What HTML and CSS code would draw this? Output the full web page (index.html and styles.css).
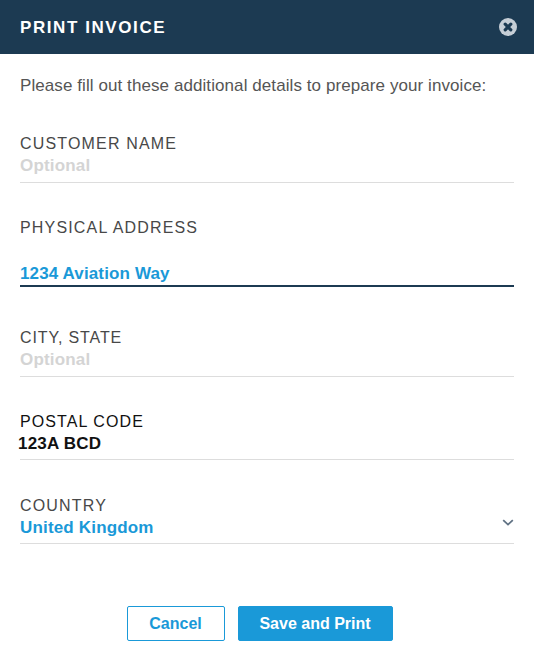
FILE: index.html
```html
<!DOCTYPE html>
<html lang="en">
<head>
<meta charset="utf-8">
<title>Print Invoice</title>
<link rel="stylesheet" href="styles.css">
</head>
<body>
<div class="modal">
  <header class="modal-header">
    <h1 class="modal-title">PRINT INVOICE</h1>
    <svg class="close-icon" viewBox="0 0 18 18" width="18" height="18" aria-hidden="true">
      <circle cx="9" cy="9" r="9" fill="#c6ced6"/>
      <path d="M6.2 6.2l5.6 5.6M11.8 6.2l-5.6 5.6" stroke="#1c3a52" stroke-width="3.2" stroke-linecap="round"/>
    </svg>
  </header>
  <main class="modal-body">
    <p class="intro">Please fill out these additional details to prepare your invoice:</p>
    <div class="field field-customer">
      <div class="field-label">CUSTOMER NAME</div>
      <div class="field-value placeholder">Optional</div>
    </div>
    <div class="field field-address">
      <div class="field-label">PHYSICAL ADDRESS</div>
      <div class="field-value accent">1234 Aviation Way</div>
    </div>
    <div class="field field-city">
      <div class="field-label tight">CITY, STATE</div>
      <div class="field-value placeholder">Optional</div>
    </div>
    <div class="field field-postal">
      <div class="field-label dark">POSTAL CODE</div>
      <div class="field-value dark shifted">123A BCD</div>
    </div>
    <div class="field field-country">
      <div class="field-label">COUNTRY</div>
      <div class="field-value accent">United Kingdom</div>
      <svg class="chevron" viewBox="0 0 12 7" width="12" height="7" aria-hidden="true">
        <path d="M1.2 1.2L6 5.6l4.8-4.4" fill="none" stroke="#5f7183" stroke-width="1.8"/>
      </svg>
    </div>
    <div class="actions">
      <button class="btn btn-outline" type="button">Cancel</button>
      <button class="btn btn-primary" type="button">Save and Print</button>
    </div>
  </main>
</div>
</body>
</html>
```
FILE: styles.css
```css
* { box-sizing: border-box; }
html, body { margin: 0; padding: 0; background: #fff; }
body { font-family: "Liberation Sans", Arial, sans-serif; width: 534px; height: 662px; overflow: hidden; }
.modal-header {
  height: 54px; background: #1c3a52; display: flex; align-items: center;
  justify-content: space-between; padding: 0 17px 0 20px;
}
.modal-title { margin: 0; padding-top: 1px; font-size: 17px; font-weight: 700; letter-spacing: 1.58px; color: #fff; }
.close-icon { display: block; }
.modal-body { padding: 22px 20px 0; }
.intro { margin: 0; font-size: 17px; line-height: 20px; letter-spacing: 0.08px; color: #555; }
.field { position: relative; border-bottom: 1px solid #ddd; }
.field-label { font-size: 16px; line-height: 20px; letter-spacing: 1.17px; color: #484848; }
.field-label.tight { letter-spacing: 0.88px; }
.field-value { font-size: 17px; line-height: 22px; letter-spacing: 0.17px; font-weight: 700; margin-top: 1px; }
.placeholder { color: #d4d4d4; }
.accent { color: #1a99d8; }
.dark { color: #111; }
.field-label.dark { letter-spacing: 1.08px; }
.field-value.shifted { margin: 1px 0 0 -2px; letter-spacing: 0.2px; }
.field-customer { margin-top: 38px; padding-bottom: 5px; }
.field-address { margin-top: 35px; padding-bottom: 0; border-bottom: 2px solid #1c3a52; }
.field-address .field-value { margin-top: 25px; letter-spacing: 0.13px; }
.field-city { margin-top: 41px; padding-bottom: 5px; }
.field-postal { margin-top: 35px; padding-bottom: 4px; }
.field-country { margin-top: 36px; padding-bottom: 4px; }
.chevron { position: absolute; right: 0; top: 23px; }
.actions { display: flex; justify-content: center; gap: 13px; margin-top: 62px; padding-right: 15px; }
.btn { height: 35px; border-radius: 2px; font: 700 16px "Liberation Sans", Arial, sans-serif; padding: 0; }
.btn-outline { width: 98px; background: #fff; border: 1px solid #1a99d8; color: #1a99d8; }
.btn-primary { width: 155px; background: #1a99d8; border: 1px solid #1a99d8; color: #fff; }
```
